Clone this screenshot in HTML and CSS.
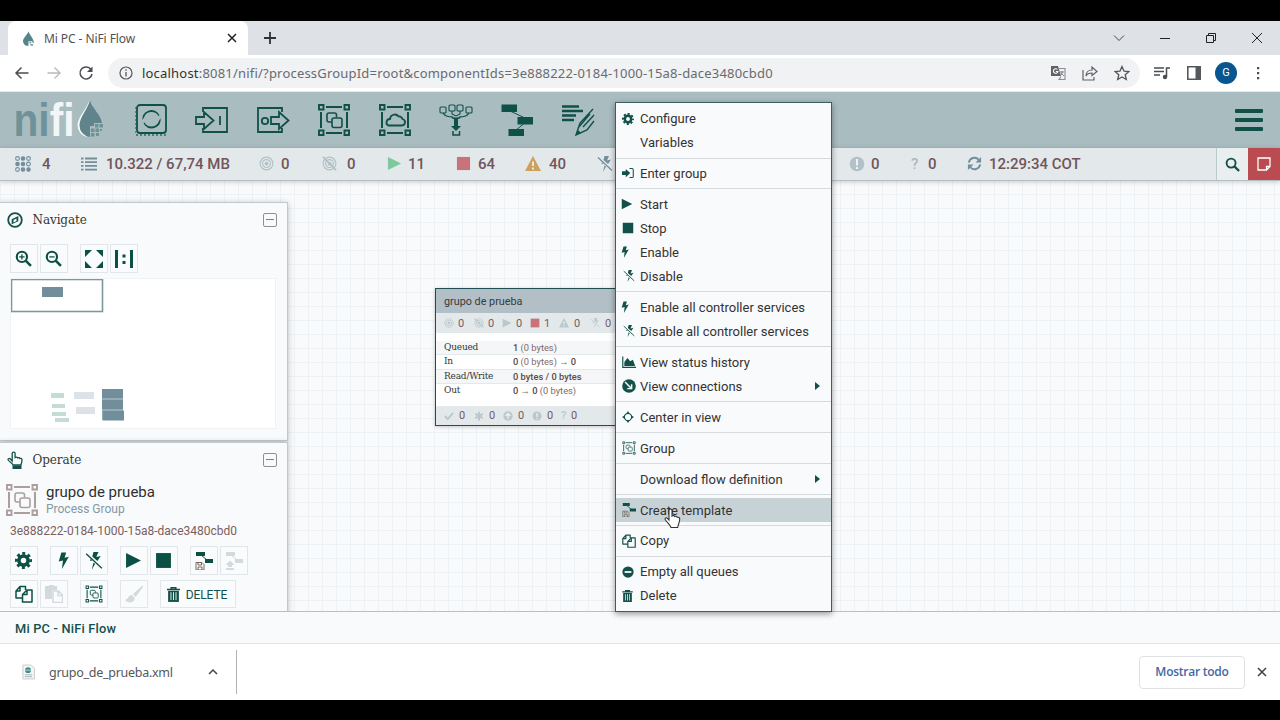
FILE: index.html
```html
<!DOCTYPE html>
<html lang="es">
<head>
<meta charset="utf-8">
<title>Mi PC - NiFi Flow</title>
<link rel="stylesheet" href="styles.css">
</head>
<body>
<svg class="defs" width="0" height="0">
  <symbol id="drop" viewBox="0 0 26 38"><path d="M12.500 0C10 9 .5 17 .5 25.500a12 12 0 0 0 9 11.500L16 6z" fill="#f4f8f8"/><path d="M13 0C11 9 2.500 17 2.500 25.500a11.500 11.500 0 0 0 10.500 11.500V26h4v-3h8C24 15 15.500 9 13 0z" fill="#5f848b"/><g fill="#6f9298"><path d="M18 24h3.500v3.500H18zM22.500 24H26v3.500h-3.500zM14 28.500h3.500V32H14zM18.500 28.500H22V32h-3.500zM23 29h2v2h-2zM14 33h3.500v3.500H14zM19 33h3v3h-3z"/></g></symbol>
  <symbol id="processor" viewBox="0 0 34 34"><g fill="none" stroke="currentColor" stroke-width="1.800"><rect x="3" y="2" width="29" height="28" rx="3"/><path d="M3 31v2M7 31v2M11 31v2M15 31v2M19 31v2M23 31v2M27 31v2M31 31v2M1 5h1M1 9h1M1 13h1M1 17h1M1 21h1M1 25h1M1 29h1" stroke-width="1.200"/></g><path d="M8.500 17A9 9 0 0 1 24 10l1.500 2.500-1 .5A8 8 0 0 0 10 14.500zM26.500 15A9 9 0 0 1 11 22.500L9.500 20l1-.5A8 8 0 0 0 25 18z" fill="currentColor"/></symbol>
  <symbol id="inport" viewBox="0 0 34 34"><g fill="none" stroke="currentColor" stroke-width="1.800"><path d="M8 9V5h24v24H8v-4M1 14h8V9l9.500 8.500L9 26v-5H1zM25 13v9"/></g></symbol>
  <symbol id="outport" viewBox="0 0 34 34"><g fill="none" stroke="currentColor" stroke-width="1.800"><path d="M26 9V5H2v24h24v-4M15 14h8V9l9.500 8.500L23 26v-5h-8z"/><circle cx="9" cy="18" r="3.200"/></g></symbol>
  <symbol id="frame" viewBox="0 0 34 34"><g fill="none" stroke="currentColor" stroke-width="1.900"><path d="M9 4h16M9 30h16M4 9v16M30 9v16" stroke-width="2"/><path d="M2 2h4.500v4.500H2zM27.500 2H32v4.500h-4.500zM2 27.500h4.500V32H2zM27.500 27.500H32V32h-4.500z"/></g></symbol>
  <symbol id="group" viewBox="0 0 34 34"><use href="#frame"/><g fill="none" stroke="currentColor" stroke-width="1.600"><path d="M15 19h-3a2 2 0 0 1-2-2v-5a2 2 0 0 1 2-2h5.500a2 2 0 0 1 2 2v2.500"/><rect x="15" y="15" width="10" height="9.500" rx="2"/></g></symbol>
  <symbol id="cloud" viewBox="0 0 34 34"><use href="#frame"/><path d="M10.500 22.500h13a3.300 3.300 0 0 0 1-6.500 3.300 3.300 0 0 0-4-2.500 4.700 4.700 0 0 0-8.500 2.500 3.400 3.400 0 0 0-1.500 6.500z" fill="none" stroke="currentColor" stroke-width="1.800"/></symbol>
  <symbol id="funnel" viewBox="0 0 34 34"><g fill="none" stroke="currentColor" stroke-width="1.100"><rect x="1" y="4" width="6" height="6" rx="1"/><rect x="10" y="2" width="6" height="6" rx="1"/><rect x="18" y="2" width="6" height="6" rx="1"/><rect x="27" y="4" width="6" height="6" rx="1"/><path d="M4 10q2 4 10 4M13 8v3l4 2 4-2V8M30 10q-2 4-10 4"/><path d="M14 28v4h6.500v-4" stroke-width="1.500"/></g><path d="M11 13q6 3 12 0l-3 3h-1v7h3l-5 5-5-5h3v-7h-1z" fill="currentColor"/></symbol>
  <symbol id="template" viewBox="0 0 34 34"><path d="M1.500 1.500H17V9H1.500zM17.500 14H33v7.500H17.500zM8.500 26H24v7H8.500z" fill="currentColor"/><path d="M10 8l15 7M16 27l10-8" stroke="currentColor" fill="none"/></symbol>
  <symbol id="label" viewBox="0 0 34 34"><path d="M1 3.500h17M1 8h21M1 12.500h14M1 17h12" stroke="currentColor" stroke-width="2.400"/><g fill="none" stroke="currentColor" stroke-width="1.400"><path d="M32 6L19 20l-4 12 11-5 7-9M29 11L17 25M33 12L22 24"/></g><path d="M15 32l2-5 3 3z" fill="currentColor"/></symbol>
  <symbol id="threads" viewBox="0 0 16 16"><g fill="none" stroke="currentColor" stroke-width="1.100"><circle cx="2.500" cy="2.500" r="1.900"/><circle cx="8" cy="2.500" r="1.700" fill="currentColor"/><circle cx="13.500" cy="2.500" r="1.900"/><circle cx="2.500" cy="8" r="1.700" fill="currentColor"/><circle cx="8" cy="8" r="1.700" fill="currentColor"/><circle cx="13.500" cy="8" r="1.900"/><circle cx="2.500" cy="13.500" r="1.900"/><circle cx="8" cy="13.500" r="1.700" fill="currentColor"/><circle cx="13.500" cy="13.500" r="1.700" fill="currentColor"/></g></symbol>
  <symbol id="list" viewBox="0 0 16 16"><path d="M0 2.500h2.500M4 2.500h12M0 6.200h2.500M4 6.200h12M0 9.900h2.500M4 9.900h12M0 13.600h2.500M4 13.600h12" stroke="currentColor" stroke-width="1.800"/></symbol>
  <symbol id="transmit" viewBox="0 0 16 16"><g fill="none" stroke="currentColor" stroke-width="1.200"><circle cx="8" cy="8" r="6.800"/><circle cx="8" cy="8" r="4.200"/></g><circle cx="8" cy="8" r="2" fill="currentColor"/></symbol>
  <symbol id="notransmit" viewBox="0 0 16 16"><use href="#transmit"/><path d="M1 1l14 14" stroke="currentColor" stroke-width="1.800"/></symbol>
  <symbol id="play" viewBox="0 0 16 16"><path d="M1 1l14 7-14 7z" fill="currentColor"/></symbol>
  <symbol id="stop" viewBox="0 0 16 16"><path d="M1 1h14v14H1z" fill="currentColor"/></symbol>
  <symbol id="warn" viewBox="0 0 16 16"><path d="M8 0l8 15H0z" fill="currentColor"/><path d="M8 5.500v4.500M8 11.500v2" stroke="#eef2f4" stroke-width="1.800"/></symbol>
  <symbol id="bolt" viewBox="0 0 16 16"><path d="M6 .5h4.500L9 5.500l4-1-6.500 11.500 1-8-4 1z" fill="currentColor"/></symbol>
  <symbol id="nobolt" viewBox="0 0 16 16"><path d="M7.500 0H12l-2 4.500 4-1-3 4.500L6.500 4zM5 6l1.500 1.500-2 .5zM7.500 9.500l1.500 1L6 16z" fill="currentColor"/><path d="M1 1.500l14 13" stroke="currentColor" stroke-width="1.200"/></symbol>
  <symbol id="excl" viewBox="0 0 16 16"><circle cx="8" cy="8" r="7.300" fill="currentColor"/><path d="M8 3v6.500M8 11v2" stroke="#eef2f4" stroke-width="2"/></symbol>
  <symbol id="refresh" viewBox="0 0 16 16"><path d="M2 7a6 6 0 0 1 10.500-3M14 9a6 6 0 0 1-10.500 3" fill="none" stroke="currentColor" stroke-width="2"/><path d="M15 1v6H9zM1 15V9h6z" fill="currentColor"/></symbol>
  <symbol id="search" viewBox="0 0 16 16"><circle cx="6.500" cy="6.500" r="4.800" fill="none" stroke="currentColor" stroke-width="2"/><path d="M10 10l5 5" stroke="currentColor" stroke-width="2.400"/></symbol>
  <symbol id="zoomin" viewBox="0 0 16 16"><use href="#search"/><path d="M4 6.500h5M6.500 4v5" stroke="currentColor" stroke-width="1.200"/></symbol>
  <symbol id="zoomout" viewBox="0 0 16 16"><use href="#search"/><path d="M4 6.500h5" stroke="currentColor" stroke-width="1.200"/></symbol>
  <symbol id="note" viewBox="0 0 16 16"><path d="M2 2h12v8.500L10.500 14H2zM14 10.500h-3.500V14" fill="none" stroke="currentColor" stroke-width="1.300"/></symbol>
  <symbol id="compass" viewBox="0 0 16 16"><circle cx="8" cy="8" r="6.800" fill="none" stroke="currentColor" stroke-width="1.800"/><path d="M11.300 4v5.300l-6.600 3V7.200z" fill="currentColor"/><path d="M6.500 8l3-1.500v2.500l-3 1.500z" fill="#f9fafc"/></symbol>
  <symbol id="hand" viewBox="0 0 16 18"><path d="M5.200 10V2.500a1.400 1.400 0 0 1 2.900 0V6.500c1-.8 2.200-.5 2.500.4 1-.6 2-.2 2.200.6 1.200-.4 2.200.2 2.200 1.500 0 2.500-.8 3.500-1 5H6C5 11.800 2.500 11 1.200 9c-.5-1 .8-2 2-1.200z" fill="none" stroke="currentColor" stroke-width="1.300"/><path d="M5.500 14.500h9V18h-9z" fill="currentColor"/></symbol>
  <symbol id="fit" viewBox="0 0 18 18"><path d="M0 0h7L0 7zM18 0v7l-7-7zM0 18v-7l7 7zM18 18h-7l7-7z" fill="currentColor"/></symbol>
  <symbol id="actual" viewBox="0 0 18 18"><path d="M0 0h3v18H0zM15 0h3v18h-3zM7.500 4.500h3v3h-3zM7.500 11h3v3h-3z" fill="currentColor"/></symbol>
  <symbol id="gear" viewBox="0 0 16 16"><circle cx="8" cy="8" r="4.300" fill="none" stroke="currentColor" stroke-width="3.400"/><circle cx="8" cy="8" r="6.700" fill="none" stroke="currentColor" stroke-width="2.600" stroke-dasharray="2.800 2.462" stroke-dashoffset="1.400"/></symbol>
  <symbol id="savetpl" viewBox="0 0 18 18"><path d="M1 0h9v4H1zM10 7h8v4h-8z" fill="currentColor"/><path d="M6 3l6 5" stroke="currentColor"/><path d="M1 10.500h6l2 2V18H1zM3 10.500v2.500h3.500v-2.500M3 18v-3h4v3" fill="none" stroke="#776a5c"/></symbol>
  <symbol id="uptpl" viewBox="0 0 18 18"><path d="M1 0h9v4H1zM10 7h8v4h-8z" fill="currentColor"/><path d="M6 3l6 5" stroke="currentColor"/><path d="M5 8.500l4.500 4.500H7v2H3v-2H.5zM1 16h8v2H1z" fill="currentColor"/></symbol>
  <symbol id="copy" viewBox="0 0 18 18"><g fill="none" stroke="currentColor" stroke-width="1.500" stroke-linejoin="round"><path d="M7 13H1V6l4-4.500h5.500V5M5 1.500V6H1M7.500 9.500L12 5h5v12H7.500zM12 5v4.500H7.500"/></g></symbol>
  <symbol id="paste" viewBox="0 0 18 18"><path d="M0 1h4V0h5v1h3v4H7v9H0z" fill="currentColor"/><path d="M8 6h5.500l4 4v7.500H8zM13 6v4.500h4.500" fill="none" stroke="currentColor" stroke-width="1.500"/></symbol>
  <symbol id="brush" viewBox="0 0 18 18"><path d="M17.500.5L8 9l2.500 3L18 2zM7 10c-4 0-3 4-7 5 3 4 10 3 9.500-2z" fill="currentColor"/></symbol>
  <symbol id="trash" viewBox="0 0 14 16"><path d="M0 2.500h14M4.500 2.500V.8h5v1.700" fill="none" stroke="currentColor" stroke-width="1.600"/><path d="M1.200 4h11.600v12H1.200z" fill="currentColor"/><path d="M4.300 5.500v8.500M7 5.500v8.500M9.700 5.500v8.500" stroke="#f4f6f8"/></symbol>
  <symbol id="check" viewBox="0 0 16 16"><path d="M1.500 8l4.500 5 8.500-10" fill="none" stroke="currentColor" stroke-width="3"/></symbol>
  <symbol id="star" viewBox="0 0 16 16"><path d="M8 1v14M2 4.500l12 7M14 4.500l-12 7" stroke="currentColor" stroke-width="3.200"/></symbol>
  <symbol id="up" viewBox="0 0 16 16"><circle cx="8" cy="8" r="7.500" fill="currentColor"/><path d="M8 13V4M4 8l4-4 4 4" fill="none" stroke="#eef2f4" stroke-width="2"/></symbol>
  <symbol id="minus" viewBox="0 0 16 16"><circle cx="8" cy="8" r="7.500" fill="currentColor"/><path d="M3.500 8h9" stroke="#f9fafc" stroke-width="2.400"/></symbol>
  <symbol id="chart" viewBox="0 0 18 16"><path d="M1 1v14h17" fill="none" stroke="currentColor" stroke-width="1.500"/><path d="M3 13V8l4-5 3.500 4L14 5l3 8z" fill="currentColor"/></symbol>
  <symbol id="connect" viewBox="0 0 16 16"><circle cx="8" cy="8" r="7.800" fill="currentColor"/><path d="M3.500 3.500l7 7M11 6v5H6" fill="none" stroke="#f9fafc" stroke-width="1.700"/></symbol>
  <symbol id="center" viewBox="0 0 16 16"><circle cx="8" cy="8" r="4.800" fill="none" stroke="currentColor" stroke-width="1.400"/><path d="M8 0l2.500 4h-5zM8 16l-2.500-4h5zM0 8l4-2.500v5zM16 8l-4 2.500v-5z" fill="currentColor"/></symbol>
  <symbol id="enter" viewBox="0 0 16 16"><path d="M0 5.500h5V2.500L11 8l-6 5.500v-3H0z" fill="currentColor"/><path d="M10 2h3.500q1.500 0 1.500 1.500v9q0 1.500-1.500 1.500H10" fill="none" stroke="currentColor" stroke-width="1.400"/></symbol>
</svg>

<div class="screen">
  <div class="tabstrip">
    <div class="tab">
      <svg class="favicon" viewBox="0 0 12 16"><path d="M6 0C5 4 0 7 0 11a5.500 5 0 0 0 6 5V11h5.500C11 7 7 4 6 0z" fill="#56838c"/><path d="M7 11.500h2v2H7zM10 10.500h2v2h-2zM8 14h3v2H8z" fill="#7fa5a9"/></svg>
      <span class="tab-title">Mi PC - NiFi Flow</span>
      <svg class="tab-close" viewBox="0 0 10 10"><path d="M1 1l8 8M9 1L1 9" stroke="#202124" stroke-width="1.500"/></svg>
    </div>
    <svg class="newtab" viewBox="0 0 12 12"><path d="M6 0v12M0 6h12" stroke="#303236" stroke-width="1.800"/></svg>
    <div class="window-buttons">
      <svg viewBox="0 0 12 12"><path d="M1 3.500l5 5 5-5" fill="none" stroke="#444"/></svg>
      <svg viewBox="0 0 12 12"><path d="M1 6.500h10" stroke="#222"/></svg>
      <svg viewBox="0 0 12 12"><path d="M1.500 3.500h7v7h-7zM3.500 3.500v-2h7v7h-2" fill="none" stroke="#222"/></svg>
      <svg viewBox="0 0 12 12"><path d="M1 1l10 10M11 1L1 11" stroke="#222"/></svg>
    </div>
  </div>

  <div class="toolbar">
    <svg viewBox="0 0 16 16"><path d="M14.500 8H2M7.500 2.500L2 8l5.500 5.500" fill="none" stroke="#4a4d51" stroke-width="1.500"/></svg>
    <svg viewBox="0 0 16 16"><path d="M1.500 8H14M8.500 2.500L14 8l-5.500 5.500" fill="none" stroke="#b8babd" stroke-width="1.400"/></svg>
    <svg viewBox="0 0 16 16"><path d="M13 4.500A6 6 0 1 0 14 9" fill="none" stroke="#4a4d51" stroke-width="1.500"/><path d="M14.500 1.500v5.500H9z" fill="#4a4d51"/></svg>
    <div class="address">
      <svg viewBox="0 0 14 14"><circle cx="7" cy="7" r="6" fill="none" stroke="#55585c" stroke-width="1.200"/><path d="M7 6v4.500M7 3.300v1.500" stroke="#55585c" stroke-width="1.300"/></svg>
      <span class="url"><b>localhost</b>:8081/nifi/?processGroupId=root&amp;componentIds=3e888222-0184-1000-15a8-dace3480cbd0</span>
      <div class="address-actions">
        <svg viewBox="0 0 16 16"><path d="M1 1h7l3 10H1z" fill="#5f6368"/><path d="M8.500 3.500h6.500v11H9l2-3" fill="none" stroke="#8a8d91" stroke-width="1.100"/><path d="M7.500 4.500A2.300 2.300 0 1 0 8 6.500H5.800" fill="none" stroke="#fff" stroke-width="1.100"/><path d="M10 7h4M12 6v1q0 3-2 4M11 8l3 3" stroke="#777" fill="none" stroke-width=".9"/></svg>
        <svg viewBox="0 0 16 16"><path d="M1 5v10h11v-3M4 11c0-4 3-6 6-6V2l5 4.500-5 4V8c-3 0-5 1-6 3z" fill="none" stroke="#5f6368" stroke-width="1.200"/></svg>
        <svg viewBox="0 0 16 16"><path d="M8 1.500l2 4.600 4.900.4-3.700 3.200 1.100 4.800L8 12l-4.300 2.500 1.100-4.800L1.100 6.500 6 6.100z" fill="none" stroke="#55585c" stroke-width="1.300"/></svg>
      </div>
    </div>
    <div class="browser-actions">
      <svg viewBox="0 0 16 16"><path d="M0 3h10M0 6.500h10M0 10h6M12.500 12V3H16" fill="none" stroke="#4a4d51" stroke-width="1.500"/><circle cx="11" cy="12" r="2.200" fill="#4a4d51"/></svg>
      <svg viewBox="0 0 16 16"><path d="M1.800 1.800h12.400v12.400H1.800z" fill="none" stroke="#55585c" stroke-width="1.600"/><path d="M9.500 2H14v12H9.500z" fill="#55585c"/></svg>
      <span class="avatar">G</span>
      <svg class="dots" viewBox="0 0 16 16"><path d="M7 2h2.200v2.200H7zM7 7h2.200v2.200H7zM7 12h2.200v2.200H7z" fill="#4a4d51"/></svg>
    </div>
  </div>

  <div class="nf-header">
    <svg class="logo" viewBox="0 0 94 56"><text x="1.500" y="44" font-size="46" textLength="61" lengthAdjust="spacingAndGlyphs" fill="#6f9298">ni<tspan fill="#f2f6f7">fi</tspan></text><use href="#drop" x="64.500" y="8" width="27" height="38"/></svg>
    <div class="components">
      <svg><use href="#processor"/></svg><svg><use href="#inport"/></svg><svg><use href="#outport"/></svg><svg><use href="#group"/></svg><svg><use href="#cloud"/></svg><svg><use href="#funnel"/></svg><svg><use href="#template"/></svg><svg><use href="#label"/></svg>
    </div>
    <div class="hamburger"><i></i><i></i><i></i></div>
  </div>

  <div class="flow-status">
    <div class="counts">
      <svg class="slate"><use href="#threads"/></svg><span>4</span>
      <svg class="slate"><use href="#list"/></svg><span class="queued">10.322 / 67,74 MB</span>
      <svg class="pale"><use href="#transmit"/></svg><span>0</span>
      <svg class="pale"><use href="#notransmit"/></svg><span>0</span>
      <svg class="run"><use href="#play"/></svg><span>11</span>
      <svg class="halt"><use href="#stop"/></svg><span>64</span>
      <svg class="amber"><use href="#warn"/></svg><span>40</span>
      <svg class="slate"><use href="#nobolt"/></svg><span></span>
      <svg class="pale"><use href="#excl"/></svg><span>0</span>
      <em>?</em><span>0</span>
      <svg class="slate"><use href="#refresh"/></svg><span class="clock">12:29:34 COT</span>
    </div>
    <div class="search-btn"><svg><use href="#search"/></svg></div>
    <div class="bulletin"><svg><use href="#note"/></svg></div>
  </div>

  <div class="canvas">
    <div class="panel navigate">
      <div class="panel-head"><svg><use href="#compass"/></svg><h2>Navigate</h2><span class="collapse"></span></div>
      <div class="btn-row">
        <button class="small"><svg><use href="#zoomin"/></svg></button><button class="small"><svg><use href="#zoomout"/></svg></button><button class="gap"><svg><use href="#fit"/></svg></button><button><svg><use href="#actual"/></svg></button>
      </div>
      <svg class="birdseye" viewBox="0 0 266 151">
        <rect x="1.500" y="1.500" width="91" height="32" fill="#fff" stroke="#7d979e" stroke-width="1.600"/>
        <rect x="32" y="9" width="21" height="10" fill="#728e9b"/>
        <g fill="#c3dcd6"><rect x="41" y="115" width="13" height="5"/><rect x="42" y="126" width="13" height="4"/><rect x="42" y="134" width="14" height="4"/><rect x="45" y="140" width="14" height="4"/></g>
        <g fill="#dde2e8"><rect x="64" y="114" width="20" height="7"/><rect x="66" y="129" width="19" height="7"/></g>
        <rect x="92" y="111" width="21" height="31" fill="#b9c8ce"/>
        <g fill="#728e9b"><rect x="92" y="111" width="21" height="9.500"/><rect x="92" y="121.500" width="21" height="10"/><rect x="92.500" y="132.500" width="21.500" height="10"/></g>
      </svg>
    </div>
    <div class="panel operate">
      <div class="panel-head"><svg><use href="#hand"/></svg><h2>Operate</h2><span class="collapse"></span></div>
      <div class="selection">
        <svg><use href="#group"/></svg>
        <div><div class="sel-name">grupo de prueba</div><div class="sel-type">Process Group</div></div>
      </div>
      <div class="sel-id">3e888222-0184-1000-15a8-dace3480cbd0</div>
      <div class="btn-row">
        <button class="small"><svg><use href="#gear"/></svg></button><button class="gap small"><svg><use href="#bolt"/></svg></button><button><svg><use href="#nobolt"/></svg></button><button class="gap small"><svg><use href="#play"/></svg></button><button class="small"><svg><use href="#stop"/></svg></button><button class="gap"><svg><use href="#savetpl"/></svg></button><button class="off"><svg><use href="#uptpl"/></svg></button>
      </div>
      <div class="btn-row second">
        <button><svg><use href="#copy"/></svg></button><button class="off"><svg><use href="#paste"/></svg></button><button class="gap"><svg><use href="#group"/></svg></button><button class="gap off"><svg><use href="#brush"/></svg></button><button class="gap delete"><svg><use href="#trash"/></svg><span>DELETE</span></button>
      </div>
    </div>

    <div class="pg">
      <div class="pg-name">grupo de prueba</div>
      <div class="pg-counts">
        <svg><use href="#transmit"/></svg><span>0</span><svg><use href="#notransmit"/></svg><span>0</span><svg><use href="#play"/></svg><span>0</span><svg class="halt"><use href="#stop"/></svg><span>1</span><svg><use href="#warn"/></svg><span>0</span><svg><use href="#nobolt"/></svg><span>0</span>
      </div>
      <dl>
        <dt>Queued</dt><dd><b>1</b> (0 bytes)</dd>
        <dt>In</dt><dd><b>0</b> (0 bytes) → <b>0</b></dd>
        <dt>Read/Write</dt><dd><b>0 bytes / 0 bytes</b></dd>
        <dt>Out</dt><dd><b>0</b> → <b>0</b> (0 bytes)</dd>
      </dl>
      <div class="pg-counts versions">
        <svg><use href="#check"/></svg><span>0</span><svg><use href="#star"/></svg><span>0</span><svg><use href="#up"/></svg><span>0</span><svg><use href="#excl"/></svg><span>0</span><em>?</em><span>0</span>
      </div>
    </div>
  </div>

  <div class="breadcrumb">Mi PC - NiFi Flow</div>

  <div class="downloads">
    <div class="download">
      <svg class="file" viewBox="0 0 14 16"><path d="M1 .5h8.500L13.500 4v11.500H1z" fill="#f4f5f6" stroke="#c5c9cc"/><circle cx="6.500" cy="6" r="3.200" fill="#3c8c8c"/><path d="M3.500 6h6" stroke="#bfe0dc"/><path d="M3 11h8M3 13h8" stroke="#a9b0b5"/></svg>
      <span>grupo_de_prueba.xml</span>
      <svg class="chev" viewBox="0 0 10 10"><path d="M1 7l4-4 4 4" fill="none" stroke="#444" stroke-width="1.500"/></svg>
    </div>
    <div class="show-all">Mostrar todo</div>
    <svg class="shelf-close" viewBox="0 0 10 10"><path d="M1 1l8 8M9 1L1 9" stroke="#444" stroke-width="1.600"/></svg>
  </div>
</div>

<div class="menu">
  <div class="item"><svg><use href="#gear"/></svg>Configure</div>
  <div class="item"><svg></svg>Variables</div>
  <hr>
  <div class="item"><svg><use href="#enter"/></svg>Enter group</div>
  <hr>
  <div class="item"><svg class="left"><use href="#play"/></svg>Start</div>
  <div class="item"><svg><use href="#stop"/></svg>Stop</div>
  <div class="item"><svg class="thin"><use href="#bolt"/></svg>Enable</div>
  <div class="item"><svg class="shift"><use href="#nobolt"/></svg>Disable</div>
  <hr>
  <div class="item"><svg class="thin"><use href="#bolt"/></svg>Enable all controller services</div>
  <div class="item"><svg class="shift"><use href="#nobolt"/></svg>Disable all controller services</div>
  <hr>
  <div class="item"><svg class="wide"><use href="#chart"/></svg>View status history</div>
  <div class="item"><svg class="wide"><use href="#connect"/></svg>View connections<i></i></div>
  <hr>
  <div class="item"><svg><use href="#center"/></svg>Center in view</div>
  <hr>
  <div class="item"><svg class="wide"><use href="#group"/></svg>Group</div>
  <hr>
  <div class="item"><svg></svg>Download flow definition<i></i></div>
  <hr>
  <div class="item active"><svg class="wide"><use href="#savetpl"/></svg>Create template</div>
  <hr>
  <div class="item"><svg class="wide"><use href="#copy"/></svg>Copy</div>
  <hr>
  <div class="item"><svg><use href="#minus"/></svg>Empty all queues</div>
  <div class="item"><svg class="bin"><use href="#trash"/></svg>Delete</div>
</div>
<svg class="pointer" viewBox="0 0 17 21"><path d="M5 12V2.500a1.500 1.500 0 0 1 3 0V8c1-.8 2.400-.4 2.700.5 1-.6 2.200-.2 2.500.8 1.300-.4 2.500.3 2.500 1.700 0 4-1.500 5-2 8.500H7C6 16.500 3 14.500 1.200 11.500c-.5-1.300 1-2.300 2.200-1.200z" fill="#fff" stroke="#333" stroke-width="1.100"/></svg>
</body>
</html>
```
FILE: styles.css
```css
* { box-sizing: border-box; }
body { margin: 0; width: 1280px; height: 720px; overflow: hidden; background: #000; font-family: Roboto, "Liberation Sans", sans-serif; color: #333; }
svg { display: block; flex: none; }
.defs { position: absolute; }
.screen { display: flex; flex-direction: column; height: 720px; padding: 21px 0 20px; }

.tabstrip { height: 34px; flex: none; display: flex; align-items: center; background: #dee1e6; padding-left: 8px; }
.tab { width: 240px; height: 34px; display: flex; align-items: center; background: #fff; border-radius: 8px 8px 0 0; padding: 0 11px 0 15px; }
.favicon { width: 11px; height: 15px; }
.tab-title { font: 12px "Noto Sans", sans-serif; color: #505356; margin-left: 10px; flex: 1; white-space: nowrap; letter-spacing: -.08px; }
.tab-close { width: 10px; height: 10px; }
.newtab { width: 12px; height: 12px; margin-left: 16px; }
.window-buttons { margin-left: auto; display: flex; gap: 34px; padding-right: 17px; }
.window-buttons svg { width: 12px; height: 12px; }

.toolbar { height: 37px; flex: none; display: flex; align-items: center; background: #fff; padding-left: 14px; border-bottom: 1px solid #e5e8e9; }
.toolbar svg { width: 16px; height: 16px; }
.toolbar > svg { margin-right: 16px; }
.address { width: 1032px; height: 30px; border-radius: 15px; background: #f0f2f4; display: flex; align-items: center; padding: 0 10px 0 11px; margin-left: -2px; }
.address > svg { width: 14px; height: 14px; }
.url { font: 13px "Noto Sans", sans-serif; color: #686b6f; margin-left: 9px; white-space: nowrap; letter-spacing: .2px; }
.url b { font-weight: 400; color: #303235; }
.address-actions { margin-left: auto; display: flex; gap: 16px; }
.browser-actions { display: flex; align-items: center; gap: 13px; margin-left: 14px; }
.browser-actions svg:nth-child(1) { margin-right: 3px; }
.avatar { width: 22px; height: 22px; border-radius: 50%; background: #07568f; color: #fff; font-size: 11px; line-height: 22px; text-align: center; }

.nf-header { height: 56px; flex: none; display: flex; align-items: center; background: #a9bcc0; color: #0f5049; padding-right: 17px; }
.logo { width: 94px; height: 56px; margin-left: 12px; font-family: "Liberation Sans", sans-serif; font-weight: 700; }
.components { display: flex; gap: 27px; margin-left: 27.500px; }
.components svg { width: 34px; height: 34px; }
.hamburger { margin-left: auto; width: 28px; display: grid; gap: 5px; }
.hamburger i { height: 4px; border-radius: 1px; background: #0f5049; }

.flow-status { height: 33px; flex: none; display: flex; background: #e3e8eb; border-bottom: 1px solid #b5bfc3; box-shadow: 0 1px 5px rgba(0,0,0,.2); position: relative; z-index: 1; }
.counts { flex: 1; display: grid; align-items: center; padding: 0 0 1px 15px; grid-template-columns: 27px 39px 25px 153px 22px 41px 25px 40px 21px 48px 22px 47px 24px 48px 22px 230px 22px 40px 17px 39px 22px 1fr; font-size: 15px; font-weight: 500; color: #715559; white-space: nowrap; }
.counts svg { width: 16px; height: 16px; }
.counts svg.run, .counts svg.halt, .counts svg:nth-of-type(3), .counts svg:nth-of-type(4), .counts svg.slate:last-of-type { width: 15px; height: 15px; }
.counts em { font-style: normal; color: #a8b9c0; }
.slate { color: #728e9b; }
.pale { color: #b2c1c7; }
.run { color: #7dc99c; }
.halt { color: #c9727b; }
.amber { color: #cf9f5d; }
.search-btn, .bulletin { width: 32px; display: flex; align-items: center; justify-content: center; }
.search-btn { border-left: 1px solid #bccacc; background: #e9eeef; color: #14504a; }
.search-btn svg { width: 15px; height: 15px; }
.bulletin { background: #ba4b51; color: #fff; }
.bulletin svg { width: 16px; height: 16px; }

.canvas { flex: 1; min-height: 0; overflow: hidden; position: relative; display: flex; flex-direction: column; align-items: flex-start; gap: 1px; padding-top: 21px; background-color: #f9fafc; background-image: linear-gradient(90deg, #eff2f4 1px, transparent 1px), linear-gradient(#eff2f4 1px, transparent 1px); background-size: 14px 14px; background-position: 0 13px; }
.panel { width: 288px; background: #f9fafc; border: 1px solid #c2c8cc; border-left: 0; box-shadow: 0 1px 6px rgba(0,0,0,.25); flex: none; color: #14504a; }
.navigate { height: 239px; }
.operate { height: 186px; }
.panel-head { height: 33px; display: flex; align-items: center; padding: 0 10px 0 7px; }
.panel-head svg { width: 16px; height: 16px; }
.operate .panel-head svg { height: 18px; }
h2 { margin: 0 0 0 9.500px; font: 12px "Roboto Slab", "DejaVu Serif", serif; letter-spacing: -.1px; color: #363636; flex: 1; }
.collapse { width: 14px; height: 14px; border: 1px solid #8b9195; border-radius: 2px; display: grid; align-items: center; padding: 0 2px; }
.collapse::before { content: ""; height: 1px; background: #7b8286; }
.btn-row { display: flex; gap: 2px; padding-left: 10px; }
button { width: 28px; height: 29px; padding: 0; border: 1px solid #e1e6e8; background: #fafbfc; color: #0b5044; display: flex; align-items: center; justify-content: center; flex: none; font: 13px Roboto, sans-serif; }
button svg { width: 18px; height: 18px; }
button.small svg { width: 17px; height: 17px; margin-right: 1px; }
button.gap { margin-left: 10px; }
button.off { color: #d3dadc; }
.navigate .btn-row { margin-top: 8px; }
.birdseye { width: 266px; height: 151px; margin: 5px 0 0 10px; background: #fff; outline: 1px solid #f0f3f5; outline-offset: -1px; }
.selection { display: flex; align-items: center; height: 40px; margin-top: 4px; padding-left: 5px; gap: 7px; }
.selection svg { width: 34px; height: 34px; color: #ad9e9e; }
.sel-name { font-size: 15px; line-height: 18px; color: #303030; }
.sel-type { font-size: 12px; line-height: 16px; color: #8299a4; }
.sel-id { font-size: 12px; line-height: 16px; margin: 3px 0 7px 10px; color: #7b5f5d; }
.second { margin-top: 5px; }
.second button { height: 28px; }
button.delete { width: 76px; gap: 6px; padding-right: 2px; font-size: 12px; color: #14504a; }
.delete svg { width: 13px; height: 15px; }
.delete span { padding-top: 2px; letter-spacing: -.1px; }

.pg { position: absolute; left: 435px; top: 107px; width: 218px; height: 138px; border: 1px solid #1f4f52; background: #fff; font-size: 9.300px; box-shadow: 0 1px 4px rgba(0,0,0,.2); }
.pg-name { height: 24px; line-height: 25px; background: #b2bfc6; padding-left: 8px; font-size: 10.800px; color: #363b3e; }
.pg-counts { height: 20px; display: grid; align-items: center; grid-template-columns: 14px 16px 14px 14px 14px 14px 14px 15px 15px 16px 15px 14px; padding-left: 8px; background: #e3e8eb; color: #bbc7cc; }
.pg-counts svg { width: 10px; height: 10px; }
.pg-counts span { color: #775c5f; font-size: 11px; }
.pg-counts .halt { color: #c9727b; }
.versions { height: 19px; grid-template-columns: 15px 15px 15px 14px 15px 14px 15px 14px 10px 14px; }
.pg-counts em { font-style: normal; font-size: 11px; font-weight: 500; }
dl { margin: 0; height: 73px; padding-top: 8px; display: grid; grid-template-columns: 77px 1fr; grid-auto-rows: 14.300px; align-content: start; line-height: 13.300px; }
dt, dd { margin: 0; border-bottom: 1px solid #e3e8eb; white-space: nowrap; }
dt { padding-left: 8px; font: 9px/13.300px "Roboto Slab", "DejaVu Serif", serif; color: #363636; letter-spacing: -.2px; }
dd { color: #806a6b; }
dd b { font-weight: 500; color: #5f484a; }
dl > :nth-child(4n+1), dl > :nth-child(4n+2) { background: #f4f6f7; }
dl > :nth-last-child(-n+2) { border: 0; }

.breadcrumb { height: 32px; flex: none; background: #f9fafc; border-top: 1px solid #b8bfc3; padding: 8px 15px; font-size: 12.800px; line-height: 17px; letter-spacing: .2px; font-weight: 500; color: #14504a; position: relative; white-space: nowrap; }
.downloads { height: 57px; flex: none; background: #fff; border-top: 1px solid #e2e5e7; display: flex; align-items: center; padding-right: 13px; }
.download { width: 237px; height: 44px; border-right: 1px solid #aeb2b5; display: flex; align-items: center; padding: 0 18px 0 22px; font: 12.500px "Noto Sans", sans-serif; letter-spacing: -.27px; color: #55585b; }
.file { width: 13px; height: 16px; }
.download span { flex: 1; margin-left: 14px; }
.chev { width: 10px; height: 10px; }
.show-all { margin-left: auto; width: 106px; height: 33px; border: 1px solid #dfe2e5; border-radius: 4px; font: 600 12px/30px "Open Sans", "Noto Sans", sans-serif; letter-spacing: -.25px; color: #4468a4; text-align: center; }
.shelf-close { width: 10px; height: 10px; margin-left: 12px; }

.menu { position: absolute; z-index: 2; left: 615px; top: 102px; width: 217px; height: 510px; padding: 3.500px 0 2.500px; border: 1px solid #3d5f61; background: #f9fafc; box-shadow: 0 2px 6px rgba(0,0,0,.4); font-size: 13px; }
.item { height: 24px; display: flex; align-items: center; padding: 0 11px 0 6px; white-space: nowrap; color: #333; }
.item svg { width: 12px; height: 12px; margin-right: 6px; color: #14504a; }
.item svg.wide { width: 14px; height: 14px; margin-right: 4px; }
.item svg.left { margin: 0 7px 0 -1px; }
.item svg.thin { width: 12px; margin: 0 9px 0 -3px; }
.item svg.shift { margin: 0 5px 0 1px; }
.item svg.bin { width: 11px; margin-right: 7px; }
.item i { margin-left: auto; border-left: 5px solid #14504a; border-top: 4px solid transparent; border-bottom: 4px solid transparent; }
.item.active { background: #c7d2d7; }
.menu hr { margin: 3px 0 2.950px; height: 1px; border: 0; background: #d4dadd; }
.pointer { position: absolute; z-index: 3; left: 664px; top: 508px; width: 17px; height: 21px; }
```
